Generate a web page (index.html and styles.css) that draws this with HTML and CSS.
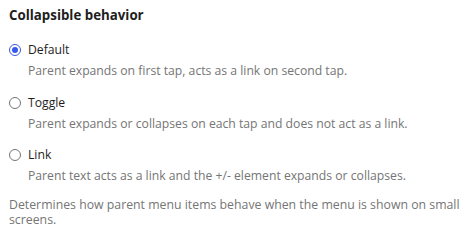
FILE: index.html
```html
<!DOCTYPE html>
<html>
<head>
<meta charset="utf-8">
<link rel="stylesheet" href="styles.css">
</head>
<body>
<div class="field">
  <h2 class="title">Collapsible behavior</h2>
  <div class="options">
    <div class="option">
      <label class="choice"><span class="radio checked"></span><span class="label">Default</span></label>
      <p class="desc">Parent expands on first tap, acts as a link on second tap.</p>
    </div>
    <div class="option">
      <label class="choice"><span class="radio"></span><span class="label">Toggle</span></label>
      <p class="desc">Parent expands or collapses on each tap and does not act as a link.</p>
    </div>
    <div class="option">
      <label class="choice"><span class="radio"></span><span class="label">Link</span></label>
      <p class="desc">Parent text acts as a link and the +/- element expands or collapses.</p>
    </div>
  </div>
  <p class="help">Determines how parent menu items behave when the menu is shown on small screens.</p>
</div>
</body>
</html>
```
FILE: styles.css
```css
html, body { margin: 0; padding: 0; background: #fff; }
body { font-family: "Open Sans", sans-serif; color: #1e1e1e; }
.field { padding: 5px 9px 0 9px; }
.title { font-size: 13.3px; font-weight: 700; margin: 0; line-height: 20px; color: #1e1e1e; }
.options { display: flex; flex-direction: column; gap: 13.5px; margin-top: 16px; }
.option { display: flex; flex-direction: column; }
.choice { display: flex; align-items: center; gap: 7px; font-size: 12.2px; line-height: 18px; color: #1e1e1e; }
.radio { width: 12px; height: 12px; border: 1px solid #757575; border-radius: 50%; box-sizing: border-box; position: relative; flex: none; }
.radio.checked { border-color: #3858e9; }
.radio.checked::after { content: ""; position: absolute; left: 2px; top: 2px; width: 6px; height: 6px; border-radius: 50%; background: #3858e9; }
.desc { margin: 3px 0 0 19px; font-size: 12.2px; line-height: 18px; color: #757575; }
.help { margin: 12px 0 0 0; font-size: 12.3px; line-height: 15px; color: #757575; }
```
